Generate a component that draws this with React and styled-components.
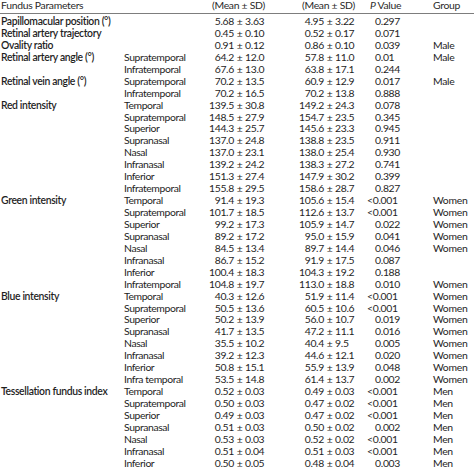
import React from 'react';
import styled, { createGlobalStyle } from 'styled-components';

const Global = createGlobalStyle`
    html, body {
        margin: 0;
        padding: 0;
        background: #fff;
        overflow: hidden;
    }
    body {
        font-family: Lato, "Open Sans", sans-serif;
        color: #1e1e1e;
    }
`;

const cols = '123px 76px 34px 11px 38px 41px 11px 40px 58px 1fr';

const Table = styled.div`
    width: 474px;
    height: 474px;
    overflow: hidden;
    font-size: 10.4px;
    letter-spacing: -0.3px;
`;

const Head = styled.div`
    display: grid;
    grid-template-columns: ${cols};
    height: 13px;
    line-height: 11px;
    padding-left: 1px;
    border-bottom: 1.3px solid #7d7d7d;
    color: #2a2a2a;
`;

const HeadCell = styled.div`
    grid-column: ${p => p.$span || 'auto'};
    padding-left: ${p => p.$pad || 0}px;
    margin-left: ${p => p.$shift || 0}px;
    white-space: nowrap;
`;

const Body = styled.div`
    padding-top: 2px;
`;

const Row = styled.div`
    display: grid;
    grid-template-columns: ${cols};
    height: 11.95px;
    line-height: 11.95px;
    padding-left: 1px;
    white-space: nowrap;
`;

const Param = styled.div`
    font-weight: 600;
    letter-spacing: -0.35px;
`;

const Region = styled.div`
    letter-spacing: -0.4px;
`;

const Cell = styled.div`
    text-align: ${p => p.$align || 'left'};
`;

const Pm = styled.div`
    text-align: center;
`;

const Less = styled.span`
    margin-left: -8px;
`;

const data = [
    ['Papillomacular position (°)', '', '5.68', '3.63', '4.95', '3.22', '0.297', ''],
    ['Retinal artery trajectory', '', '0.45', '0.10', '0.52', '0.17', '0.071', ''],
    ['Ovality ratio', '', '0.91', '0.12', '0.86', '0.10', '0.039', 'Male'],
    ['Retinal artery angle (°)', 'Supratemporal', '64.2', '12.0', '57.8', '11.0', '0.01', 'Male'],
    ['', 'Infratemporal', '67.6', '13.0', '63.8', '17.1', '0.244', ''],
    ['Retinal vein angle (°)', 'Supratemporal', '70.2', '13.5', '60.9', '12.9', '0.017', 'Male'],
    ['', 'Infratemporal', '70.2', '16.5', '70.2', '13.8', '0.888', ''],
    ['Red intensity', 'Temporal', '139.5', '30.8', '149.2', '24.3', '0.078', ''],
    ['', 'Supratemporal', '148.5', '27.9', '154.7', '23.5', '0.345', ''],
    ['', 'Superior', '144.3', '25.7', '145.6', '23.3', '0.945', ''],
    ['', 'Supranasal', '137.0', '24.8', '138.8', '23.5', '0.911', ''],
    ['', 'Nasal', '137.0', '23.1', '138.0', '25.4', '0.930', ''],
    ['', 'Infranasal', '139.2', '24.2', '138.3', '27.2', '0.741', ''],
    ['', 'Inferior', '151.3', '27.4', '147.9', '30.2', '0.399', ''],
    ['', 'Infratemporal', '155.8', '29.5', '158.6', '28.7', '0.827', ''],
    ['Green intensity', 'Temporal', '91.4', '19.3', '105.6', '15.4', '<0.001', 'Women'],
    ['', 'Supratemporal', '101.7', '18.5', '112.6', '13.7', '<0.001', 'Women'],
    ['', 'Superior', '99.2', '17.3', '105.9', '14.7', '0.022', 'Women'],
    ['', 'Supranasal', '89.2', '17.2', '95.0', '15.9', '0.041', 'Women'],
    ['', 'Nasal', '84.5', '13.4', '89.7', '14.4', '0.046', 'Women'],
    ['', 'Infranasal', '86.7', '15.2', '91.9', '17.5', '0.087', ''],
    ['', 'Inferior', '100.4', '18.3', '104.3', '19.2', '0.188', ''],
    ['', 'Infratemporal', '104.8', '19.7', '113.0', '18.8', '0.010', 'Women'],
    ['Blue intensity', 'Temporal', '40.3', '12.6', '51.9', '11.4', '<0.001', 'Women'],
    ['', 'Supratemporal', '50.5', '13.6', '60.5', '10.6', '<0.001', 'Women'],
    ['', 'Superior', '50.2', '13.9', '56.0', '10.7', '0.019', 'Women'],
    ['', 'Supranasal', '41.7', '13.5', '47.2', '11.1', '0.016', 'Women'],
    ['', 'Nasal', '35.5', '10.2', '40.4', '9.5', '0.005', 'Women'],
    ['', 'Infranasal', '39.2', '12.3', '44.6', '12.1', '0.020', 'Women'],
    ['', 'Inferior', '50.8', '15.1', '55.9', '13.9', '0.048', 'Women'],
    ['', 'Infra temporal', '53.5', '14.8', '61.4', '13.7', '0.002', 'Women'],
    ['Tessellation fundus index', 'Temporal', '0.52', '0.03', '0.49', '0.03', '<0.001', 'Men'],
    ['', 'Supratemporal', '0.50', '0.03', '0.47', '0.02', '<0.001', 'Men'],
    ['', 'Superior', '0.49', '0.03', '0.47', '0.02', '<0.001', 'Men'],
    ['', 'Supranasal', '0.51', '0.03', '0.50', '0.02', '0.002', 'Men'],
    ['', 'Nasal', '0.53', '0.03', '0.52', '0.02', '<0.001', 'Men'],
    ['', 'Infranasal', '0.51', '0.04', '0.51', '0.03', '<0.001', 'Men'],
    ['', 'Inferior', '0.50', '0.05', '0.48', '0.04', '0.003', 'Men'],
];

const PValue = ({ value }) =>
    value.startsWith('<') ? (
        <Cell>
            <Less>&lt;</Less>
            {value.slice(1)}
        </Cell>
    ) : (
        <Cell>{value}</Cell>
    );

export default function App() {
    return (
        <Table>
            <Global />
            <Head>
                <HeadCell $span="1 / 3">Fundus Parameters</HeadCell>
                <HeadCell $span="3 / 6" $pad={12}>(Mean ± SD)</HeadCell>
                <HeadCell $span="6 / 9" $pad={19}>(Mean ± SD)</HeadCell>
                <HeadCell $shift={-5}>
                    <i>P</i> Value
                </HeadCell>
                <HeadCell>Group</HeadCell>
            </Head>
            <Body>
                {data.map((r, i) => (
                    <Row key={i}>
                        <Param>{r[0]}</Param>
                        <Region>{r[1]}</Region>
                        <Cell $align="right">{r[2]}</Cell>
                        <Pm>±</Pm>
                        <Cell>{r[3]}</Cell>
                        <Cell $align="right">{r[4]}</Cell>
                        <Pm>±</Pm>
                        <Cell>{r[5]}</Cell>
                        <PValue value={r[6]} />
                        <Cell>{r[7]}</Cell>
                    </Row>
                ))}
            </Body>
        </Table>
    );
}
